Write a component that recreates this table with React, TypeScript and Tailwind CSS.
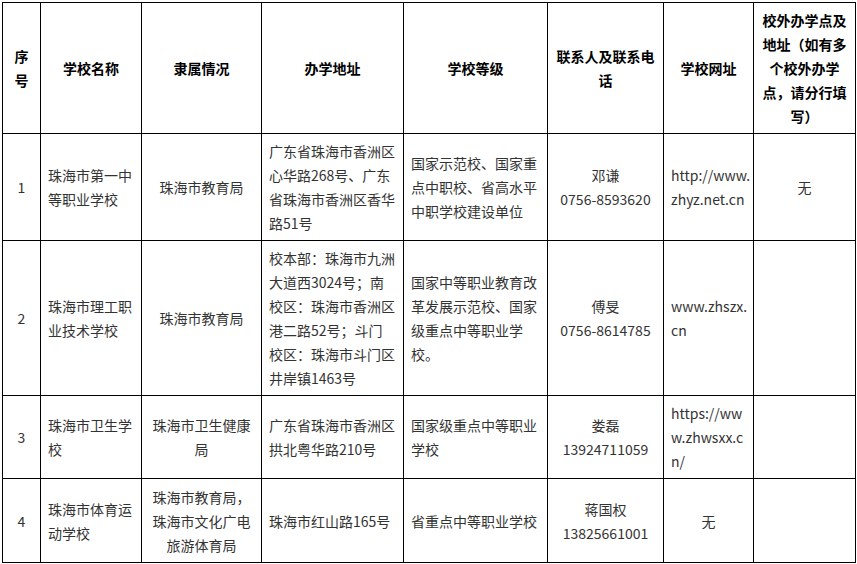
import React from "react";

const L = ({ lines }: { lines: string[] }) => (
  <>
    {lines.map((l, i) => (
      <div key={i} className="whitespace-nowrap">
        {l}
      </div>
    ))}
  </>
);

type Cell = { lines: string[]; align: "left" | "center" };

const rows: { h: string; cells: Cell[] }[] = [
  {
    h: "h-[107px]",
    cells: [
      { lines: ["1"], align: "center" },
      { lines: ["珠海市第一中", "等职业学校"], align: "left" },
      { lines: ["珠海市教育局"], align: "center" },
      { lines: ["广东省珠海市香洲区", "心华路268号、广东", "省珠海市香洲区香华", "路51号"], align: "left" },
      { lines: ["国家示范校、国家重", "点中职校、省高水平", "中职学校建设单位"], align: "left" },
      { lines: ["邓谦", "0756-8593620"], align: "center" },
      { lines: ["http://www.", "zhyz.net.cn"], align: "left" },
      { lines: ["无"], align: "center" },
    ],
  },
  {
    h: "h-[155px]",
    cells: [
      { lines: ["2"], align: "center" },
      { lines: ["珠海市理工职", "业技术学校"], align: "left" },
      { lines: ["珠海市教育局"], align: "center" },
      {
        lines: ["校本部：珠海市九洲", "大道西3024号；南", "校区：珠海市香洲区", "港二路52号；斗门", "校区：珠海市斗门区", "井岸镇1463号"],
        align: "left",
      },
      { lines: ["国家中等职业教育改", "革发展示范校、国家", "级重点中等职业学", "校。"], align: "left" },
      { lines: ["傅旻", "0756-8614785"], align: "center" },
      { lines: ["www.zhszx.", "cn"], align: "left" },
      { lines: [""], align: "center" },
    ],
  },
  {
    h: "h-[83px]",
    cells: [
      { lines: ["3"], align: "center" },
      { lines: ["珠海市卫生学", "校"], align: "left" },
      { lines: ["珠海市卫生健康", "局"], align: "center" },
      { lines: ["广东省珠海市香洲区", "拱北粤华路210号"], align: "left" },
      { lines: ["国家级重点中等职业", "学校"], align: "left" },
      { lines: ["娄磊", "13924711059"], align: "center" },
      { lines: ["https://ww", "w.zhwsxx.c", "n/"], align: "left" },
      { lines: [""], align: "center" },
    ],
  },
  {
    h: "h-[84px]",
    cells: [
      { lines: ["4"], align: "center" },
      { lines: ["珠海市体育运", "动学校"], align: "left" },
      { lines: ["珠海市教育局，", "珠海市文化广电", "旅游体育局"], align: "center" },
      { lines: ["珠海市红山路165号"], align: "left" },
      { lines: ["省重点中等职业学校"], align: "left" },
      { lines: ["蒋国权", "13825661001"], align: "center" },
      { lines: ["无"], align: "center" },
      { lines: [""], align: "center" },
    ],
  },
];

const headers: string[][] = [
  ["序", "号"],
  ["学校名称"],
  ["隶属情况"],
  ["办学地址"],
  ["学校等级"],
  ["联系人及联系电", "话"],
  ["学校网址"],
  ["校外办学点及", "地址（如有多", "个校外办学", "点，请分行填", "写）"],
];

export default function App() {
  return (
    <div className="w-[857px] h-[564px] bg-white overflow-hidden pt-[2px] pl-[2px]">
      <table
        className="table-fixed border-collapse w-[853px] text-[14px] leading-[24px] text-[#333333]"
        style={{ fontFamily: '"Noto Sans CJK SC", "Noto Sans", sans-serif' }}
      >
        <colgroup>
          <col className="w-[38px]" />
          <col className="w-[101px]" />
          <col className="w-[120px]" />
          <col className="w-[142px]" />
          <col className="w-[144px]" />
          <col className="w-[116px]" />
          <col className="w-[90px]" />
          <col className="w-[102px]" />
        </colgroup>
        <tbody>
          <tr className="h-[131px]">
            {headers.map((h, i) => (
              <td
                key={i}
                className="border border-black px-[6px] py-0 align-middle text-center font-bold text-black"
              >
                <L lines={h} />
              </td>
            ))}
          </tr>
          {rows.map((r, ri) => (
            <tr key={ri} className={r.h}>
              {r.cells.map((c, ci) => (
                <td
                  key={ci}
                  className={
                    "border border-black px-[7px] py-0 align-middle " +
                    (c.align === "center" ? "text-center" : "text-left")
                  }
                >
                  <L lines={c.lines} />
                </td>
              ))}
            </tr>
          ))}
        </tbody>
      </table>
    </div>
  );
}
